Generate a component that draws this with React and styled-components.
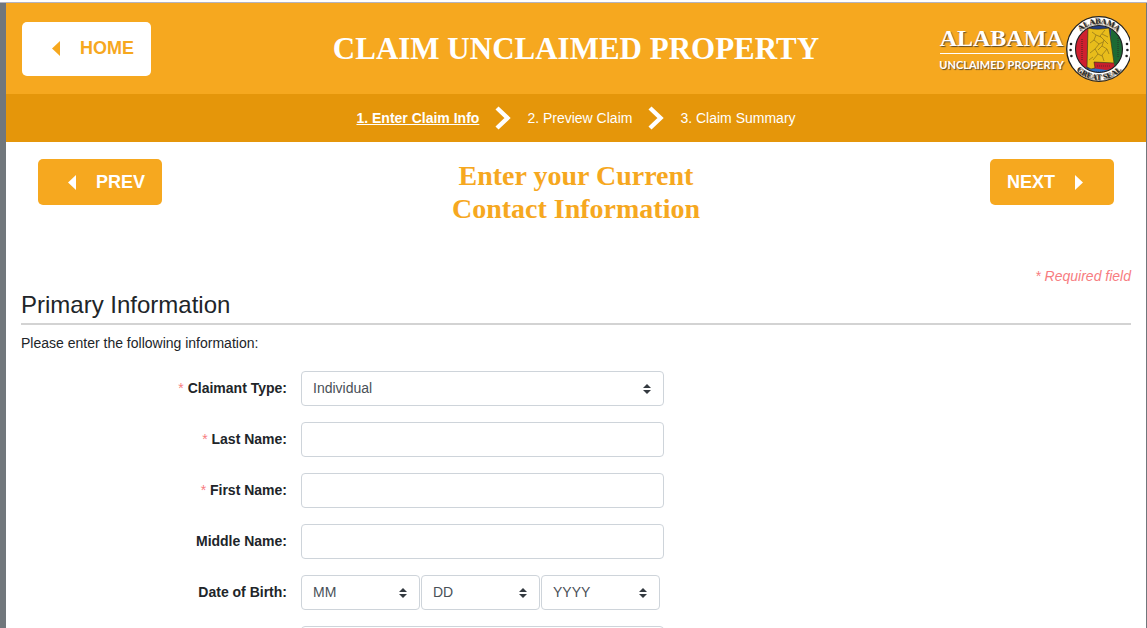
import React from "react";
import styled, { createGlobalStyle } from "styled-components";

const steps = ["1. Enter Claim Info", "2. Preview Claim", "3. Claim Summary"];

const dateParts = [
  { id: "month", label: "Month", placeholder: "MM" },
  { id: "day", label: "Day", placeholder: "DD" },
  { id: "year", label: "Year", placeholder: "YYYY" }
];

const GlobalStyle = createGlobalStyle`
  * {
    box-sizing: border-box;
  }

  html {
    scrollbar-width: none;
  }

  body {
    margin: 0;
    background-color: #71777c;
    color: #212529;
    font-family: "Liberation Sans", Arial, sans-serif;
    font-size: 14px;
    line-height: 21px;
  }

  h1,
  h2,
  h3,
  p,
  ol {
    margin: 0;
    padding: 0;
  }
`;

const TopLine = styled.div`
  height: 3px;
  background-color: #fff;
  border-bottom: 1px solid #b4b4c0;
`;

const Page = styled.div`
  margin: 0 1px 0 6px;
  min-height: calc(100vh - 3px);
  background-color: #fff;
`;

const Header = styled.header`
  display: grid;
  grid-template-columns: 1fr auto 1fr;
  align-items: center;
  padding: 12px 16px 11px;
  background-color: #f6a81f;

  h1 {
    color: #fff;
    font-family: "Liberation Serif", "Times New Roman", serif;
    font-size: 31px;
    line-height: 38px;
  }
`;

const Button = styled.button`
  display: inline-flex;
  align-items: center;
  justify-self: ${({ $end }) => ($end ? "end" : "start")};
  gap: 20px;
  height: ${({ $light }) => ($light ? "54px" : "46px")};
  padding: ${({ $end }) => ($end ? "0 31px 0 17px" : "0 17px 0 30px")};
  padding-bottom: ${({ $light }) => ($light ? "2px" : "0")};
  border: 0;
  border-radius: 5px;
  background-color: ${({ $light }) => ($light ? "#fff" : "#f6a81f")};
  color: ${({ $light }) => ($light ? "#f6a81f" : "#fff")};
  font-family: inherit;
  font-size: 18px;
  font-weight: 700;
  cursor: pointer;

  svg {
    fill: currentColor;
  }
`;

const Logo = styled.a`
  display: flex;
  align-items: center;
  justify-self: end;
  gap: 2px;
  color: #fff;
  text-decoration: none;
  text-shadow: 1px 1px 1px #5b4a2c;

  svg {
    display: block;
  }
`;

const LogoText = styled.span`
  display: flex;
  flex-direction: column;
  align-items: center;
`;

const LogoName = styled.span`
  border-bottom: 1px solid #fff;
  font-family: "Liberation Serif", "Times New Roman", serif;
  font-size: 24px;
  font-weight: 700;
  line-height: 30px;
`;

const LogoTag = styled.span`
  font-family: Lato, sans-serif;
  font-size: 11px;
  font-weight: 700;
  line-height: 22px;
`;

const Steps = styled.ol`
  display: flex;
  align-items: center;
  justify-content: center;
  height: 48px;
  background-color: #e5960a;
  color: #fff;
  list-style: none;

  li {
    display: flex;
    align-items: center;
  }

  li[aria-current] span {
    font-weight: 700;
    text-decoration: underline;
  }

  svg {
    margin: 0 16px;
  }
`;

const Toolbar = styled.div`
  display: grid;
  grid-template-columns: 1fr 270px 1fr;
  align-items: start;
  padding: 17px 32px 41px;

  h2 {
    color: #f6a81f;
    font-family: "Liberation Serif", "Times New Roman", serif;
    font-size: 28px;
    line-height: 33px;
    text-align: center;
  }
`;

const Content = styled.main`
  padding: 0 15px 32px;
`;

const Required = styled.p`
  color: #f77c80;
  font-style: italic;
  text-align: right;
`;

const SectionTitle = styled.h3`
  margin: 4px 0 8px;
  padding-bottom: 4px;
  border-bottom: 2px solid #d3d3d3;
  font-size: 24px;
  font-weight: 400;
  line-height: 28px;
`;

const Form = styled.form`
  display: grid;
  gap: 16px;
  margin-top: 17px;
`;

const Row = styled.div`
  display: grid;
  grid-template-columns: 266px minmax(0, 363px);
  column-gap: 14px;
  align-items: center;
`;

const Label = styled.label`
  font-weight: 700;
  text-align: right;
`;

const Star = styled.span`
  color: #f77c80;
  font-weight: 400;
`;

const Input = styled.input`
  grid-column: 2;
  width: 100%;
  height: 35px;
  padding: 0 11px;
  border: 1px solid #ced4da;
  border-radius: 4px;
  background-color: #fff;
  color: #495057;
  font: inherit;
`;

const SelectBox = styled.div`
  display: grid;
  align-items: center;

  select,
  svg {
    grid-area: 1 / 1;
  }

  select {
    appearance: none;
    width: 100%;
    height: 35px;
    padding: 0 24px 0 11px;
    border: 1px solid #ced4da;
    border-radius: 4px;
    background-color: #fff;
    color: #495057;
    font: inherit;
  }

  svg {
    justify-self: end;
    margin-right: 13px;
    pointer-events: none;
  }
`;

const DateGroup = styled.div`
  display: grid;
  grid-template-columns: repeat(3, 119px);
  gap: 1px;
`;

const CaretLeft = () => (
  <svg width="8" height="15" viewBox="0 0 8 15" aria-hidden="true">
    <path d="M8 0v15L0 7.5z" />
  </svg>
);

const CaretRight = () => (
  <svg width="8" height="15" viewBox="0 0 8 15" aria-hidden="true">
    <path d="M0 0v15l8-7.5z" />
  </svg>
);

const Chevron = () => (
  <svg width="16" height="24" viewBox="0 0 16 24" aria-hidden="true">
    <path d="M2 2l10.5 10L2 22" fill="none" stroke="#fff" strokeWidth="4.4" />
  </svg>
);

const Seal = () => (
  <svg width="64" height="68" viewBox="0 0 64 68" aria-hidden="true">
    <defs>
      <clipPath id="seal-inner">
        <circle cx="33" cy="34" r="23.5" />
      </clipPath>
      <path id="seal-top" d="M7.6 34a25.4 25.4 0 0 1 50.8 0" />
      <path id="seal-bottom" d="M2.2 34a30.8 30.8 0 0 0 61.6 0" />
    </defs>
    <circle cx="33" cy="34" r="32.3" fill="#fff" stroke="#222" strokeWidth="1.3" />
    <g clipPath="url(#seal-inner)">
      <path d="M0 0h66v68H0z" fill="#243f86" />
      <path d="M0 17l22-4-1 38-4 8H0z" fill="#cf2030" />
      <path d="M45 14h21v46H50l-5-12z" fill="#1d6a35" />
      <path d="M22 54l8-3 14 2 5 6-16 3z" fill="#2e6fc0" />
      <path d="M26 47l22 1 1 6-9 1-14-2z" fill="#c6202e" />
      <path
        d="M22 13c8 2 14 1 21 0l5 35-20-1 1 6-4 1-4-2z"
        fill="#e9bd1c"
        stroke="#3b3210"
        strokeWidth="0.6"
      />
      <path
        d="M26 17l4 3-2 5 5 4-4 5 3 5-5 6M39 15l-5 6 4 4-2 6 5 3-5 6 2 6M30 20l5 2M28 25l-4 3M33 29l4-2M29 34l-5 4M36 31l-4 4M41 34l2 5M32 39l4 2M27 42l-4 3M36 19l6 3M38 25l4 4"
        fill="none"
        stroke="#957a1c"
        strokeWidth="0.8"
      />
      <path d="M16 24v21M52 23v19" stroke="#2b2a24" strokeWidth="1.3" strokeDasharray="1 1" opacity="0.65" />
      <path d="M31 51h14M28 57h13" stroke="#302336" strokeWidth="1" strokeDasharray="1 1" opacity="0.6" />
    </g>
    <circle cx="33" cy="34" r="23.5" fill="none" stroke="#222" strokeWidth="1.1" />
    <g fill="#222">
      <circle cx="5" cy="29" r="1.3" />
      <circle cx="4.6" cy="35" r="1.3" />
      <circle cx="5.4" cy="41" r="1.3" />
      <circle cx="61" cy="29" r="1.3" />
      <circle cx="61.4" cy="35" r="1.3" />
      <circle cx="60.6" cy="41" r="1.3" />
    </g>
    <g fill="#222" fontFamily="Liberation Serif, serif" fontSize="8" fontWeight="700" textAnchor="middle">
      <text>
        <textPath href="#seal-top" startOffset="50%">
          ALABAMA
        </textPath>
      </text>
      <text>
        <textPath href="#seal-bottom" startOffset="50%">
          GREAT SEAL
        </textPath>
      </text>
    </g>
  </svg>
);

const Select = ({ children, ...props }) => (
  <SelectBox>
    <select {...props}>{children}</select>
    <svg width="8" height="10" viewBox="0 0 4 5" aria-hidden="true">
      <path d="M2 0L0 2h4zm0 5L0 3h4z" fill="#343a40" />
    </svg>
  </SelectBox>
);

const Field = ({ id, label, required, children }) => (
  <Row>
    <Label htmlFor={id}>
      {required && <Star>* </Star>}
      {label}:
    </Label>
    {children || <Input id={id} type="text" required={required} />}
  </Row>
);

const App = () => {
  return (
    <>
      <GlobalStyle />
      <TopLine />
      <Page>
        <Header>
          <Button type="button" $light>
            <CaretLeft />
            HOME
          </Button>
          <h1>CLAIM UNCLAIMED PROPERTY</h1>
          <Logo href="/">
            <LogoText>
              <LogoName>ALABAMA</LogoName>
              <LogoTag>UNCLAIMED PROPERTY</LogoTag>
            </LogoText>
            <Seal />
          </Logo>
        </Header>
        <Steps>
          {steps.map((step, index) => (
            <li key={step} aria-current={index === 0 ? "step" : undefined}>
              {index > 0 && <Chevron />}
              <span>{step}</span>
            </li>
          ))}
        </Steps>
        <Toolbar>
          <Button type="button">
            <CaretLeft />
            PREV
          </Button>
          <h2>Enter your Current Contact Information</h2>
          <Button type="button" $end>
            NEXT
            <CaretRight />
          </Button>
        </Toolbar>
        <Content>
          <Required>* Required field</Required>
          <SectionTitle>Primary Information</SectionTitle>
          <p>Please enter the following information:</p>
          <Form>
            <Field id="claimant-type" label="Claimant Type" required>
              <Select id="claimant-type">
                <option>Individual</option>
              </Select>
            </Field>
            <Field id="last-name" label="Last Name" required />
            <Field id="first-name" label="First Name" required />
            <Field id="middle-name" label="Middle Name" />
            <Field id="month" label="Date of Birth">
              <DateGroup>
                {dateParts.map(({ id, label, placeholder }) => (
                  <Select key={id} id={id} aria-label={label}>
                    <option>{placeholder}</option>
                  </Select>
                ))}
              </DateGroup>
            </Field>
            <Row>
              <Input type="email" aria-label="Email" />
            </Row>
          </Form>
        </Content>
      </Page>
    </>
  );
};

export default App;
